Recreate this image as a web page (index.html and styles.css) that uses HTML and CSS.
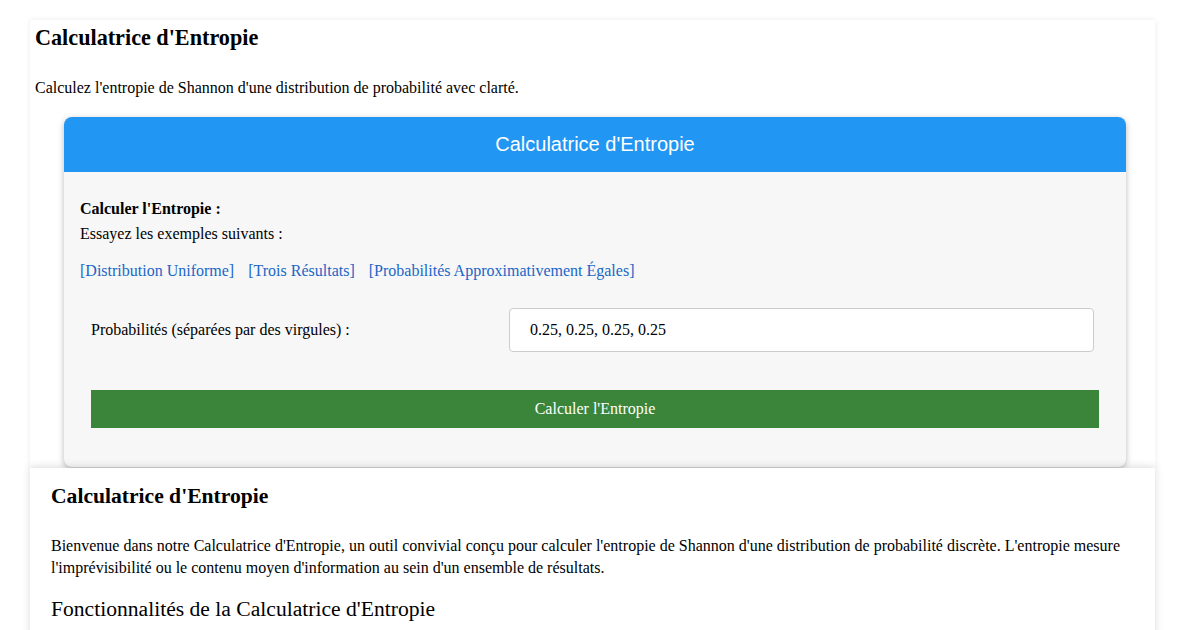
FILE: index.html
```html
<!DOCTYPE html>
<html lang="fr">
  <head>
    <meta charset="UTF-8" />
    <meta name="viewport" content="width=device-width, initial-scale=1.0" />
    <title>Calculatrice d'Entropie</title>
    <link rel="stylesheet" href="styles.css">
  </head>
  <body>
    <div class="page">
      <h1 class="page-title">Calculatrice d'Entropie</h1>
      <p class="intro">Calculez l'entropie de Shannon d'une distribution de probabilité avec clarté.</p>
      <div class="calc">
        <div class="calc-head">Calculatrice d'Entropie</div>
        <div class="calc-body">
          <p class="calc-label">Calculer l'Entropie :</p>
          <p class="calc-hint">Essayez les exemples suivants :</p>
          <div class="examples">
            <a href="#" class="example" data-values="0.25, 0.25, 0.25, 0.25">[Distribution Uniforme]</a>
            <a href="#" class="example" data-values="0.5, 0.3, 0.2">[Trois Résultats]</a>
            <a href="#" class="example" data-values="0.24, 0.26, 0.25, 0.25">[Probabilités Approximativement Égales]</a>
          </div>
          <form class="calc-form" name="entropy">
            <div class="row">
              <label for="probs" class="row-label">Probabilités (séparées par des virgules) :</label>
              <input type="text" id="probs" class="input-box" value="0.25, 0.25, 0.25, 0.25" />
            </div>
            <button type="submit" class="calc-btn">Calculer l'Entropie</button>
          </form>
        </div>
      </div>
    </div>
    <div class="page article">
      <h2 class="article-title">Calculatrice d'Entropie</h2>
      <p>Bienvenue dans notre Calculatrice d'Entropie, un outil convivial conçu pour calculer l'entropie de Shannon d'une distribution de probabilité discrète. L'entropie mesure l'imprévisibilité ou le contenu moyen d'information au sein d'un ensemble de résultats.</p>
      <h3 class="article-sub">Fonctionnalités de la Calculatrice d'Entropie</h3>
      <p>Notre calculatrice accepte une liste de probabilités séparées par des virgules et renvoie l'entropie en bits, ainsi que le détail de chaque terme du calcul.</p>
      <p>Les probabilités doivent être positives et leur somme doit être égale à 1.</p>
    </div>
    <script>
      const input = document.querySelector("#probs");
      // exemples
      document.querySelectorAll(".example").forEach(function (a) {
        a.addEventListener("click", function (e) {
          e.preventDefault();
          input.value = a.dataset.values;
        });
      });
      document.querySelector(".calc-form").addEventListener("submit", function (e) {
        e.preventDefault();
        const p = input.value.split(",").map(Number);
        let h = 0;
        p.forEach(function (x) {
          if (x > 0) h -= x * Math.log2(x);
        });
        alert("Entropie : " + h.toFixed(4) + " bits");
      });
    </script>
  </body>
</html>
```

FILE: styles.css
```css
* {
  box-sizing: border-box;
}
body {
  margin: 0;
  font-family: "Liberation Serif", "Times New Roman", serif;
  font-size: 16px;
  color: #000;
  background: #fff;
}
.page {
  width: 1125px;
  margin: 20px 0 0 30px;
  padding: 4px 5px 1px;
  background: #fff;
  box-shadow: 0 0 6px rgba(0, 0, 0, 0.08);
}
.page-title {
  font-size: 22.2px;
  margin: 0 0 27px;
  line-height: 28px;
}
.intro {
  margin: 0 0 20px;
  line-height: 18px;
}
.calc {
  width: 1062px;
  margin: 0 0 0 29px;
  background: #f7f7f7;
  border-radius: 8px;
  box-shadow: 0 2px 6px rgba(0, 0, 0, 0.28);
  overflow: hidden;
}
.calc-head {
  height: 55px;
  line-height: 54px;
  background: #2196f3;
  color: #fff;
  text-align: center;
  font-family: "Liberation Sans", Arial, sans-serif;
  font-size: 20px;
}
.calc-body {
  padding: 28px 16px 39px;
}
.calc-label {
  font-weight: bold;
  margin: 0;
  line-height: 18px;
}
.calc-hint {
  margin: 7px 0 0;
  line-height: 18px;
}
.examples {
  display: flex;
  gap: 14px;
  margin-top: 19px;
  line-height: 18px;
}
.example {
  color: #1a66c6;
  text-decoration: none;
}
.calc-form {
  padding: 0 11px;
  margin-top: 28px;
}
.row {
  display: flex;
  align-items: center;
}
.row-label {
  width: 418px;
}
.input-box {
  width: 585px;
  height: 44px;
  border: 1px solid #ccc;
  border-radius: 4px;
  padding: 0 20px;
  font-family: inherit;
  font-size: 16px;
  background: #fff;
}
.calc-btn {
  display: block;
  width: 100%;
  height: 38px;
  margin-top: 38px;
  border: none;
  background: #3a853a;
  color: #fff;
  font-family: inherit;
  font-size: 16px;
}
.article {
  margin-top: 0;
  padding: 15px 20px 20px 21px;
  box-shadow: 0 -1px 8px rgba(0, 0, 0, 0.15);
}
.article-title {
  font-size: 21.6px;
  margin: 0 0 26px;
  line-height: 26px;
}
.article p {
  margin: 0 0 17px;
  line-height: 22px;
}
.article-sub {
  font-size: 21.6px;
  font-weight: normal;
  margin: 0 0 14px;
  line-height: 26px;
}
```
